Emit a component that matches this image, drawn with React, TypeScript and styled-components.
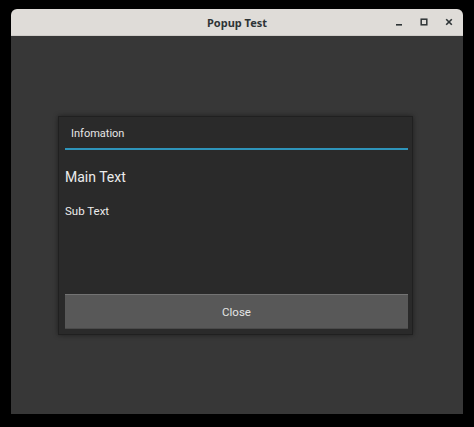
import styled, { createGlobalStyle } from "styled-components";

const GlobalStyle = createGlobalStyle`
  html, body {
    margin: 0;
    padding: 0;
    background: #000;
  }
  body {
    font-family: Roboto, "Noto Sans", sans-serif;
  }
`;

const Screen = styled.div`
  width: 474px;
  height: 427px;
  padding: 9px 11px 13px 11px;
  box-sizing: border-box;
  display: flex;
`;

const Window = styled.div`
  flex: 1;
  display: flex;
  flex-direction: column;
  border-radius: 6px 6px 0 0;
  overflow: hidden;
`;

const TitleBar = styled.div`
  height: 27px;
  flex-shrink: 0;
  background: #dfdcd8;
  border-bottom: 1px solid #cfccc8;
  box-sizing: border-box;
  display: grid;
  grid-template-columns: 1fr auto 1fr;
  align-items: center;
`;

const WindowTitle = styled.span`
  grid-column: 2;
  font-family: "Noto Sans", sans-serif;
  font-weight: 700;
  font-size: 11px;
  color: #2e3436;
  padding-top: 1px;
`;

const Controls = styled.div`
  grid-column: 3;
  justify-self: end;
  display: flex;
  align-items: center;
  gap: 13px;
  padding-right: 8px;
`;

const ControlButton = styled.span`
  width: 12px;
  height: 12px;
  display: flex;
  align-items: center;
  justify-content: center;
  color: #2e3436;
`;

const Content = styled.div`
  flex: 1;
  background: #373737;
  display: flex;
  align-items: center;
  justify-content: center;
`;

const Dialog = styled.div`
  width: 355px;
  height: 219px;
  margin-right: 3px;
  box-sizing: border-box;
  background: #2a2a2a;
  border: 1px solid #202020;
  box-shadow: 0 0 5px rgba(0, 0, 0, 0.45);
  padding: 5px 4px 5px 6px;
  display: flex;
  flex-direction: column;
`;

const DialogTitle = styled.div`
  height: 26px;
  line-height: 24px;
  padding: 0 6px;
  font-size: 11px;
  color: #e6e6e6;
`;

const Separator = styled.div`
  height: 2px;
  background: #2fa7d4;
  opacity: 0.85;
`;

const Body = styled.div`
  flex: 1;
  display: flex;
  flex-direction: column;
`;

const MainText = styled.div`
  margin-top: 18px;
  font-size: 14px;
  line-height: 18px;
  color: #ececec;
`;

const SubText = styled.div`
  margin-top: 18px;
  font-size: 11.5px;
  line-height: 14px;
  color: #ececec;
`;

const CloseButton = styled.button`
  height: 35px;
  margin-top: auto;
  background: #585858;
  border: none;
  border-top: 1px solid #737373;
  border-bottom: 1px solid #4a4a4a;
  font-family: Roboto, sans-serif;
  font-size: 11.5px;
  color: #e4e4e4;
  padding: 2px 0 0;
  cursor: pointer;
`;

const App = () => {
  return (
    <>
      <GlobalStyle />
      <Screen>
        <Window>
          <TitleBar>
            <WindowTitle>Popup Test</WindowTitle>
            <Controls>
              <ControlButton>
                <svg width="8" height="8" viewBox="0 0 8 8">
                  <rect x="1" y="6" width="6" height="1.6" fill="currentColor" />
                </svg>
              </ControlButton>
              <ControlButton>
                <svg width="8" height="8" viewBox="0 0 8 8">
                  <rect x="1.2" y="1.2" width="5.6" height="5.6" fill="none" stroke="currentColor" strokeWidth="1.5" />
                </svg>
              </ControlButton>
              <ControlButton>
                <svg width="8" height="8" viewBox="0 0 8 8">
                  <path d="M1.2 1.2 L6.8 6.8 M6.8 1.2 L1.2 6.8" stroke="currentColor" strokeWidth="1.6" />
                </svg>
              </ControlButton>
            </Controls>
          </TitleBar>
          <Content>
            <Dialog>
              <DialogTitle>Infomation</DialogTitle>
              <Separator />
              <Body>
                <MainText>Main Text</MainText>
                <SubText>Sub Text</SubText>
                <CloseButton>Close</CloseButton>
              </Body>
            </Dialog>
          </Content>
        </Window>
      </Screen>
    </>
  );
};

export default App;
